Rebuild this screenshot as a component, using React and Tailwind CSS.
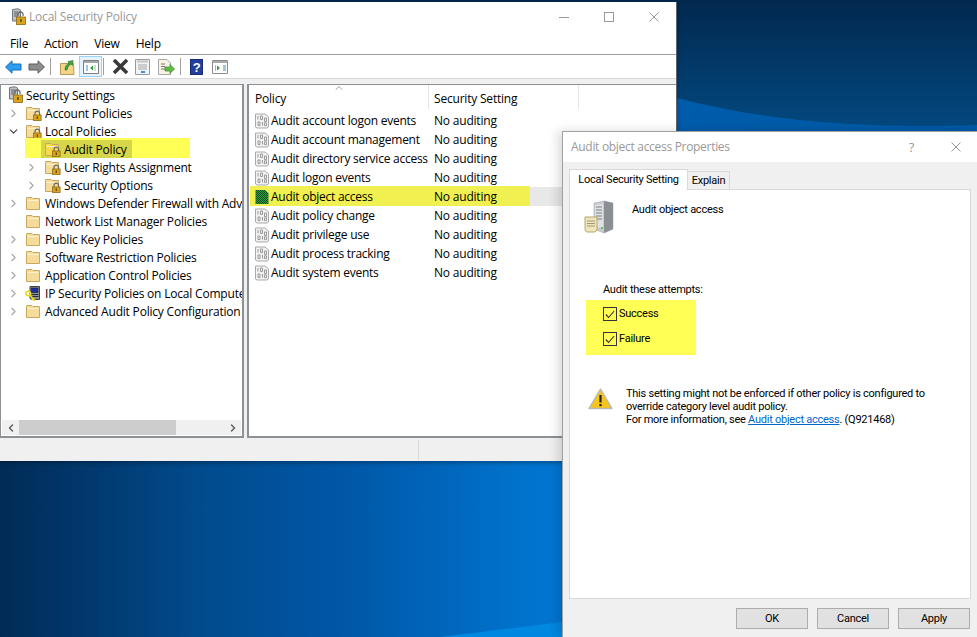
import { ChevronRight, ChevronDown, ChevronLeft, ChevronUp } from "lucide-react";

const treeRows = [
  { label: "Account Policies", icon: "lock", arrow: "right" },
  { label: "Local Policies", icon: "lock", arrow: "down" },
  { label: "Audit Policy", icon: "lockOpen", nested: true, picked: true },
  { label: "User Rights Assignment", icon: "lock", arrow: "right", nested: true },
  { label: "Security Options", icon: "lock", arrow: "right", nested: true },
  { label: "Windows Defender Firewall with Advanced Security", icon: "plain", arrow: "right" },
  { label: "Network List Manager Policies", icon: "plain" },
  { label: "Public Key Policies", icon: "plain", arrow: "right" },
  { label: "Software Restriction Policies", icon: "plain", arrow: "right" },
  { label: "Application Control Policies", icon: "plain", arrow: "right" },
  { label: "IP Security Policies on Local Computer", icon: "ipsec", arrow: "right" },
  { label: "Advanced Audit Policy Configuration", icon: "plain", arrow: "right" },
];

const policies = [
  "Audit account logon events",
  "Audit account management",
  "Audit directory service access",
  "Audit logon events",
  "Audit object access",
  "Audit policy change",
  "Audit privilege use",
  "Audit process tracking",
  "Audit system events",
];

function Wallpaper() {
  return (
    <svg className="absolute inset-0" width="977" height="637" viewBox="0 0 977 637">
      <defs>
        <linearGradient id="wall" x1="0" y1="0" x2="1" y2="0">
          <stop offset="0" stopColor="#012b57" />
          <stop offset="0.1" stopColor="#013a70" />
          <stop offset="0.2" stopColor="#014a8c" />
          <stop offset="0.36" stopColor="#0058a8" />
          <stop offset="0.53" stopColor="#0072cc" />
          <stop offset="0.6" stopColor="#0078d4" />
        </linearGradient>
        <linearGradient id="wallTop" x1="0" y1="0" x2="0" y2="1">
          <stop offset="0" stopColor="#02284f" />
          <stop offset="1" stopColor="#03487f" />
        </linearGradient>
        <linearGradient id="wallMid" x1="0" y1="0" x2="1" y2="1">
          <stop offset="0" stopColor="#0062b3" />
          <stop offset="1" stopColor="#0058a4" />
        </linearGradient>
      </defs>
      <rect width="977" height="637" fill="url(#wall)" />
      <rect x="560" width="417" height="140" fill="url(#wallMid)" />
      <path d="M677 0H977V125C880 128 780 125 677 98Z" fill="url(#wallTop)" />
      <rect width="700" height="4" fill="#02284f" />
      <path d="M440 637L562 622V637Z" fill="#0088e0" />
    </svg>
  );
}

function Folder({ kind }) {
  return (
    <svg width="17" height="16" viewBox="0 0 17 16" className="shrink-0">
      <path d="M1.5 3.5V2.5H7L8 3.5H14.5V14.5H1.5Z" fill={kind === "lockOpen" ? "#f9d84f" : "#f6dc9a"} stroke="#c8a860" />
      <path d="M2.5 5.5H13.5" stroke="#fff3cf" />
      {kind !== "plain" && (
        <g>
          <path d="M10 10V8.5A2.3 2.3 0 0 1 14.6 8.5V10" fill="none" stroke="#6b6b6b" strokeWidth="1.2" />
          <rect x="8.5" y="10" width="7.6" height="5.5" fill="#d9a520" stroke="#8d6a10" strokeWidth="0.8" />
          <rect x="11.6" y="11.5" width="1.4" height="2.4" fill="#5f4708" />
        </g>
      )}
    </svg>
  );
}

function ServerLock() {
  return (
    <svg width="17" height="18" viewBox="0 0 17 18" className="shrink-0">
      <path d="M2.5 1.5L8 .8L10.5 2V13H2.5Z" fill="#bfc3c8" stroke="#70757a" />
      <path d="M4 4H8M4 6H8M4 8H8" stroke="#5c6165" />
      <path d="M8 8V6.5A2.5 2.5 0 0 1 13 6.5V8" fill="none" stroke="#6b6b6b" strokeWidth="1.3" />
      <rect x="6.5" y="9" width="9" height="7.5" fill="#d9a520" stroke="#8d6a10" strokeWidth="0.8" />
      <rect x="10.2" y="11" width="1.5" height="3" fill="#5f4708" />
    </svg>
  );
}

function IpSecIcon() {
  return (
    <svg width="17" height="17" viewBox="0 0 17 17" className="shrink-0">
      <path d="M5 1.5H14.5V14.5H6L5 13Z" fill="#8f9499" stroke="#3c4043" />
      <rect x="6.5" y="3" width="6.5" height="4.5" fill="#1a2fa8" stroke="#15181b" strokeWidth="0.6" />
      <path d="M6.5 9.5H13.5M6.5 11.5H13.5" stroke="#2b2e31" />
      <circle cx="3.2" cy="8.5" r="2.2" fill="none" stroke="#e8d820" strokeWidth="1.6" />
      <path d="M4.8 10L10 15.5M8 13.5L6.8 15M9.4 15L8.4 16.3" stroke="#e8d820" strokeWidth="1.6" />
    </svg>
  );
}

function PolicyIcon({ active }) {
  if (active) {
    return (
      <svg width="14" height="16" viewBox="0 0 14 16" className="shrink-0">
        <defs>
          <pattern id="dither" width="2" height="2" patternUnits="userSpaceOnUse">
            <rect width="2" height="2" fill="#2f9a3a" />
            <rect width="1" height="1" fill="#124f28" />
            <rect x="1" y="1" width="1" height="1" fill="#124f28" />
          </pattern>
        </defs>
        <path d="M.5 1H10L13.5 4V15H.5Z" fill="url(#dither)" />
      </svg>
    );
  }
  return (
    <svg width="14" height="16" viewBox="0 0 14 16" className="shrink-0">
      <path d="M.5 1H10L13.5 4V14L12 15H2L.5 14Z" fill="#f2f2f2" stroke="#a9a9a9" />
      <path d="M3 3V6.5M5.5 3H7.5V6.5H5.5ZM3 9H5V12.5H3ZM7.5 9V12.5M9.5 5H11.5V8.5H9.5ZM9.5 9.8H11.5V12.6H9.5Z" fill="none" stroke="#9a9a9a" />
    </svg>
  );
}

function TreeRow({ row }) {
  return (
    <div className="relative flex h-[18px] items-center">
      {row.picked && <div className="absolute left-[24px] top-[-2px] h-5 w-[165px] bg-[#ffff55]" />}
      {row.picked && <div className="absolute left-[40px] top-0 h-[18px] w-[91px] bg-[#d6d64a]" />}
      <div className={row.nested ? "relative flex w-[43px] shrink-0 justify-end pr-[6px]" : "relative flex w-[24px] shrink-0 justify-end pr-[5px]"}>
        {row.arrow === "right" && <ChevronRight size={13} strokeWidth={2} className="text-[#a6a6a6]" />}
        {row.arrow === "down" && <ChevronDown size={13} strokeWidth={2} className="text-[#404040]" />}
      </div>
      <div className="relative flex w-5 shrink-0">
        {row.icon === "ipsec" ? <IpSecIcon /> : <Folder kind={row.icon} />}
      </div>
      <span className="relative whitespace-nowrap pt-[1px]">{row.label}</span>
    </div>
  );
}

function ToolbarIcons() {
  return (
    <div className="flex h-[23px] items-center bg-white pl-[5px]">
      <svg width="17" height="14" viewBox="0 0 17 14" className="shrink-0">
        <path d="M.5 7L7 .8V4H16V10H7V13.2Z" fill="#2b9df0" stroke="#176fb8" />
      </svg>
      <svg width="17" height="14" viewBox="0 0 17 14" className="ml-[6px] shrink-0">
        <path d="M16.5 7L10 .8V4H1V10H10V13.2Z" fill="#8d8d8d" stroke="#5d5d5d" />
      </svg>
      <div className="ml-[5px] h-[17px] w-px bg-[#a0a0a0]" />
      <svg width="15" height="16" viewBox="0 0 15 16" className="ml-[9px] shrink-0">
        <path d="M.5 4.5H13.5L14 15.5H.5Z" fill="#f2d589" stroke="#b79a52" />
        <path d="M5 11C5 7 7 5 9 4.5L8 2.5L13 1.5L12.5 6.5L11 5C9 6 7.5 8 7 11Z" fill="#3fa83f" stroke="#24702a" strokeWidth="0.6" />
      </svg>
      <div className="ml-[4px] flex h-[21px] w-[23px] items-center justify-center border border-[#99d1ff] bg-[#e5f3ff]">
        <svg width="16" height="14" viewBox="0 0 16 14">
          <path d="M.5.5H15.5V13.5H.5Z" fill="#fff" stroke="#7c7c7c" />
          <path d="M.5 1H15.5V3H.5Z" fill="#a8a8a8" />
          <path d="M3 6H5M3 8H5M3 10H5" stroke="#4a8ab0" />
          <path d="M10 5.5V10.5L7 8Z" fill="#2e9e3d" />
          <path d="M12 5V11" stroke="#b0b0b0" />
        </svg>
      </div>
      <div className="ml-[1px] h-[17px] w-px bg-[#a0a0a0]" />
      <svg width="17" height="15" viewBox="0 0 17 15" className="ml-[8px] shrink-0">
        <path d="M2 1L15 14M15 1L2 14" stroke="#3a3a3a" strokeWidth="3.6" />
      </svg>
      <svg width="15" height="16" viewBox="0 0 15 16" className="ml-[6px] shrink-0">
        <path d="M.5.5H14.5V15.5H.5Z" fill="#f3f3f3" stroke="#9a9a9a" />
        <path d="M2 2.5H13" stroke="#c4c4c4" strokeWidth="2" />
        <path d="M3 6H12M3 8H12M3 10H12" stroke="#a5a5a5" />
        <path d="M6 13H10" stroke="#2a9fd0" strokeWidth="2" />
      </svg>
      <svg width="17" height="16" viewBox="0 0 17 16" className="ml-[8px] shrink-0">
        <path d="M.5.5H9L12.5 4V15.5H.5Z" fill="#f8f3e2" stroke="#a8a8a8" />
        <path d="M3 5H7M3 7.5H7M3 10H7" stroke="#777" />
        <path d="M7 8H12V5.5L16.5 10L12 14.5V12H7Z" fill="#62bb46" stroke="#3d8a2b" strokeWidth="0.7" />
      </svg>
      <div className="ml-[5px] h-[17px] w-px bg-[#a0a0a0]" />
      <svg width="13" height="16" viewBox="0 0 13 16" className="ml-[9px] shrink-0">
        <rect width="13" height="16" fill="#233f9e" />
        <rect x=".5" y=".5" width="12" height="15" fill="none" stroke="#1a2c75" />
        <text x="6.5" y="13" textAnchor="middle" fontSize="13" fontWeight="700" fill="#fff" fontFamily="Liberation Sans">?</text>
      </svg>
      <svg width="16" height="14" viewBox="0 0 16 14" className="ml-[9px] shrink-0">
        <path d="M.5.5H15.5V13.5H.5Z" fill="#fff" stroke="#8a8a8a" />
        <path d="M.5 1H15.5V3H.5Z" fill="#a8a8a8" />
        <path d="M5 5.5V10.5L8 8Z" fill="#2e9e3d" />
        <path d="M3.5 5V11" stroke="#b0b0b0" />
        <path d="M11 6H14M11 8H14M11 10H14" stroke="#4a8ab0" />
      </svg>
    </div>
  );
}

function MainWindow() {
  return (
    <div className="absolute left-0 top-[2px] flex h-[459px] w-[677px] flex-col border-r border-[#60666d] bg-[#f0f0f0] text-[12px] tracking-[-0.2px] text-black shadow-[0_2px_4px_rgba(0,0,0,0.3)]">
      <div className="flex h-[31px] items-center bg-white pb-[1px] pl-[10px] pr-[17px] text-[#999999]">
        <ServerLock />
        <span className="ml-[2px]">Local Security Policy</span>
        <div className="ml-auto flex items-center gap-[35px] text-[#999999]">
          <div className="h-px w-[10px] bg-[#999999]" />
          <div className="h-[10px] w-[10px] border border-[#999999]" />
          <svg width="10" height="10" viewBox="0 0 10 10">
            <path d="M.5.5L9.5 9.5M9.5.5L.5 9.5" stroke="#999999" />
          </svg>
        </div>
      </div>
      <div className="flex h-[22px] items-center gap-[16px] border-b border-[#a0a0a0] bg-white pl-[10px]">
        <span>File</span>
        <span>Action</span>
        <span>View</span>
        <span>Help</span>
      </div>
      <ToolbarIcons />
      <div className="h-px bg-[#d9d9d9]" />
      <div className="h-[5px]" />
      <div className="flex h-[354px] gap-[3px]">
        <div className="relative w-[244px] shrink-0 overflow-hidden border-2 border-l-[1px] border-t-[1px] border-[#8c9196] bg-white">
          <div className="flex h-[18px] items-center pl-[6px] pt-[2px]">
            <ServerLock />
            <span className="ml-[2px] pt-[2px]">Security Settings</span>
          </div>
          <div className="pt-[1px]">
            {treeRows.map((row) => (
              <TreeRow key={row.label} row={row} />
            ))}
          </div>
          <div className="absolute bottom-[1px] left-px right-px flex h-[15px] items-center bg-[#f0f0f0]">
            <div className="flex w-[17px] justify-center">
              <ChevronLeft size={12} strokeWidth={3} className="text-[#606060]" />
            </div>
            <div className="h-full w-[157px] bg-[#cdcdcd]" />
            <div className="ml-auto flex w-[17px] justify-center">
              <ChevronRight size={12} strokeWidth={3} className="text-[#606060]" />
            </div>
          </div>
        </div>
        <div className="relative flex-1 overflow-hidden border-2 border-t-[1px] border-r-0 border-[#8c9196] bg-white">
          <div className="relative flex h-[24px]">
            <ChevronUp size={12} strokeWidth={1.5} className="absolute left-[84px] top-[-3px] text-[#808080]" />
            <div className="flex w-[180px] items-center border-r border-[#e5e5e5] pl-[6px] pt-[3px]">Policy</div>
            <div className="flex w-[150px] items-center border-r border-[#e5e5e5] pl-[5px] pt-[3px]">Security Setting</div>
          </div>
          <div className="pt-[2px]">
            {policies.map((name, i) => (
              <div key={name} className="relative flex h-[19px] items-center pl-[6px]">
                {i === 4 && <div className="absolute left-[1px] top-[-1px] h-5 w-[280px] bg-[#f0f050]" />}
                {i === 4 && <div className="absolute left-[281px] top-0 h-[19px] right-0 bg-[#e8e8e8]" />}
                <div className="relative flex w-[16px] shrink-0">
                  <PolicyIcon active={i === 4} />
                </div>
                <span className="relative w-[163px] shrink-0 whitespace-nowrap tracking-[-0.25px]">{name}</span>
                <span className="relative">No auditing</span>
              </div>
            ))}
          </div>
        </div>
      </div>
      <div className="flex flex-1">
        <div className="mt-[2px] h-[20px] w-px translate-x-[418px] bg-[#d9d9d9]" />
      </div>
    </div>
  );
}

function Check({ label }) {
  return (
    <div className="flex items-center gap-[2px]">
      <div className="flex h-[14px] w-[14px] items-center justify-center border border-[#333333] bg-transparent">
        <svg width="10" height="9" viewBox="0 0 10 9">
          <path d="M.8 4.5L3.6 7.5L9.2 1" fill="none" stroke="#333333" strokeWidth="1.1" />
        </svg>
      </div>
      <span>{label}</span>
    </div>
  );
}

function Dialog() {
  return (
    <div className="absolute left-[562px] top-[131px] flex h-[506px] w-[415px] flex-col border-l border-t border-[#a0a0a0] bg-[#f0f0f0] font-['Roboto',sans-serif] text-[11px] leading-[14px] tracking-[-0.25px] text-black shadow-[-4px_0_10px_rgba(0,0,0,0.15)]">
      <div className="flex h-[30px] shrink-0 items-center bg-white pl-[8px] pr-[16px] font-['Open_Sans',sans-serif] text-[12px] tracking-[-0.3px] text-[#999999]">
        <span>Audit object access Properties</span>
        <span className="ml-auto mr-[37px] text-[13px]">?</span>
        <svg width="10" height="10" viewBox="0 0 10 10">
          <path d="M.5.5L9.5 9.5M9.5.5L.5 9.5" stroke="#999999" />
        </svg>
      </div>
      <div className="flex h-[27px] shrink-0 items-end pl-[6px] pt-[8px]">
        <div className="z-10 mb-[-1px] flex h-[21px] w-[119px] items-center justify-center border border-b-0 border-[#d9d9d9] bg-white">
          Local Security Setting
        </div>
        <div className="flex h-[18px] w-[42px] items-center justify-center border border-b-0 border-l-0 border-[#d9d9d9] bg-[#f0f0f0]">
          Explain
        </div>
      </div>
      <div className="mx-[6px] h-[410px] w-[402px] border border-[#d9d9d9] bg-white">
        <div className="flex pl-[14px] pt-[10px]">
          <svg width="31" height="34" viewBox="0 0 31 34" className="shrink-0">
            <path d="M10 3L20 1L29 3V29L20 33L10 29Z" fill="#c7cbcf" stroke="#9a9ea2" strokeWidth="0.5" />
            <path d="M20 1L29 3V29L20 33Z" fill="#8b8f93" />
            <path d="M11 5L19 4V28L11 27Z" fill="#dfe2e4" />
            <path d="M12 7H18M12 10H18M12 13H18M12 16H18M12 19H18" stroke="#7c8084" />
            <rect x="17" y="27" width="2" height="2" fill="#6cc24a" />
            <path d="M1 17H13V30L11 32H3Q1 31 1 29Z" fill="#efe5b8" stroke="#b5a670" />
            <path d="M3 21H11M3 23.5H11M3 26H11" stroke="#9e9a80" />
          </svg>
          <div className="ml-[17px] pt-[3px]">Audit object access</div>
        </div>
        <div className="pl-[33px] pt-[49px]">Audit these attempts:</div>
        <div className="ml-[16px] mt-[3px] flex h-[55px] w-[110px] flex-col justify-center gap-[11px] bg-[#ffff55] pb-[2px] pl-[17px]">
          <Check label="Success" />
          <Check label="Failure" />
        </div>
        <div className="flex pl-[18px] pt-[32px]">
          <svg width="25" height="22" viewBox="0 0 25 22" className="mt-px shrink-0">
            <path d="M12.5 1L24 20.5H1Z" fill="#f6c51c" stroke="#b8b8b8" strokeWidth="1.4" strokeLinejoin="round" />
            <rect x="11.4" y="7" width="2.2" height="7.5" fill="#222" />
            <rect x="11.4" y="16" width="2.2" height="2.2" fill="#222" />
          </svg>
          <div className="ml-[13px] leading-[13px]">
            <div>This setting might not be enforced if other policy is configured to</div>
            <div>override category level audit policy.</div>
            <div>
              For more information, see <span className="text-[#0066cc] underline">Audit object access</span>. (Q921468)
            </div>
          </div>
        </div>
      </div>
      <div className="flex justify-end gap-[9px] pr-[7px] pt-[9px]">
        <button className="h-[21px] w-[72px] border border-[#adadad] bg-[#e1e1e1]">OK</button>
        <button className="h-[21px] w-[72px] border border-[#adadad] bg-[#e1e1e1]">Cancel</button>
        <button className="h-[21px] w-[72px] border border-[#adadad] bg-[#e1e1e1]">Apply</button>
      </div>
    </div>
  );
}

export default function App() {
  return (
    <div className="relative h-[637px] w-[977px] overflow-hidden font-['Open_Sans',sans-serif]">
      <Wallpaper />
      <MainWindow />
      <Dialog />
    </div>
  );
}
